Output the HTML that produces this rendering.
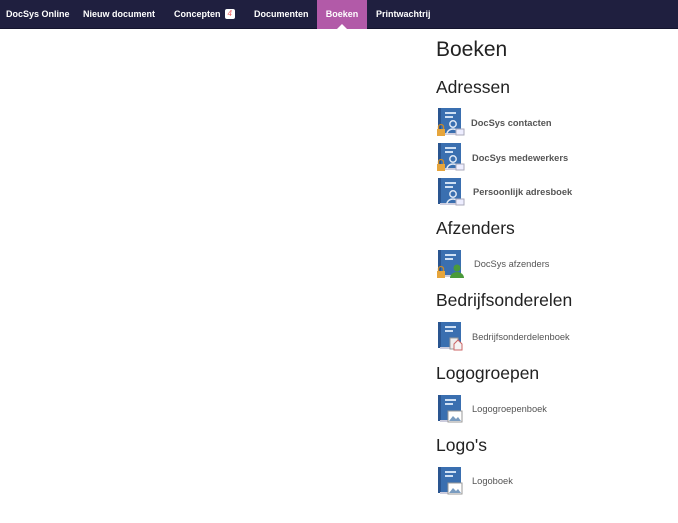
<!DOCTYPE html>
<html><head><meta charset="utf-8"><style>
*{margin:0;padding:0;box-sizing:border-box}
body{width:678px;height:523px;background:#fff;font-family:"Liberation Sans",sans-serif;position:relative;overflow:hidden}
.nav{position:absolute;left:0;top:0;width:678px;height:29px;background:#1f1f3f;border-bottom:1px solid #14142e}
.nav span{position:absolute;top:0;height:29px;line-height:29px;color:#fff;font-size:9px;font-weight:bold}
.act{background:#b25aa8;}
.badge{display:inline-block;background:#fff;color:#e66;font-size:8px;line-height:10px;padding:0 3px;border-radius:2px;vertical-align:1px;margin-left:4px;font-weight:normal}
.h{position:absolute;left:436px;color:#222;font-weight:normal}
.t{position:absolute;font-size:9.3px;color:#555}
.ic{position:absolute;left:437px;width:28px;height:30px}
</style></head><body>
<div class="nav">
<span style="left:6px">DocSys Online</span>
<span style="left:83px">Nieuw document</span>
<span style="left:174px">Concepten<i class="badge">4</i></span>
<span style="left:254px">Documenten</span>
<span class="act" style="left:317px;width:50px;text-align:center">Boeken</span>
<span style="left:376px">Printwachtrij</span>
<div style="position:absolute;left:337px;top:24px;width:0;height:0;border-left:5px solid transparent;border-right:5px solid transparent;border-bottom:5px solid #fff"></div>
</div>
<div class="h" style="top:38px;font-size:21px">Boeken</div>
<div class="h" style="top:77px;font-size:17.5px">Adressen</div>
<div class="h" style="top:218px;font-size:17.5px">Afzenders</div>
<div class="h" style="top:290px;font-size:17.5px">Bedrijfsonderelen</div>
<div class="h" style="top:363px;font-size:17.5px">Logogroepen</div>
<div class="h" style="top:435px;font-size:17.5px">Logo's</div>

<svg width="0" height="0" style="position:absolute"><defs>
<g id="bk"><rect x="1" y="1" width="23" height="26" fill="#3a6fb0"/><rect x="1" y="1" width="3" height="26" fill="#2a5590"/><rect x="8" y="5" width="11" height="2" fill="#cfe0f4"/><rect x="8" y="9" width="8" height="2" fill="#cfe0f4"/><rect x="3" y="26" width="21" height="2" fill="#ccd"/></g>
<g id="lock"><rect x="0" y="22" width="8" height="7" fill="#e6a53c"/><path d="M1.5 22v-2a2.5 2.5 0 0 1 5 0v2" stroke="#c98a2a" stroke-width="1.3" fill="none"/></g>
<g id="ppl"><circle cx="16" cy="17" r="3.2" fill="none" stroke="#dfe8f4" stroke-width="1.5"/><path d="M10 27a6 5 0 0 1 12 0" fill="none" stroke="#dfe8f4" stroke-width="1.5"/><rect x="19" y="22" width="8" height="6" fill="#eef" stroke="#aab"/></g>
</defs></svg>

<svg class="ic" style="top:107px"><use href="#bk"/><use href="#ppl"/><use href="#lock"/></svg>
<div class="t" style="left:471px;top:118px;font-weight:bold">DocSys contacten</div>
<svg class="ic" style="top:142px"><use href="#bk"/><use href="#ppl"/><use href="#lock"/></svg>
<div class="t" style="left:472px;top:153px;font-weight:bold">DocSys medewerkers</div>
<svg class="ic" style="top:177px"><use href="#bk"/><use href="#ppl"/></svg>
<div class="t" style="left:473px;top:187px;font-weight:bold">Persoonlijk adresboek</div>
<svg class="ic" style="top:249px"><use href="#bk"/><circle cx="20" cy="19" r="3.5" fill="#4a9a3a"/><path d="M13 29a7 6 0 0 1 14 0z" fill="#4a9a3a"/><use href="#lock"/></svg>
<div class="t" style="left:474px;top:259px">DocSys afzenders</div>
<svg class="ic" style="top:321px"><use href="#bk"/><rect x="13" y="17" width="8" height="11" fill="#eee" stroke="#999"/><path d="M17 23l4-4 4 4v6h-8z" fill="#f4f4f4" stroke="#c66"/></svg>
<div class="t" style="left:472px;top:332px">Bedrijfsonderdelenboek</div>
<svg class="ic" style="top:394px"><use href="#bk"/><rect x="11" y="17" width="14" height="11" fill="#fff" stroke="#999"/><path d="M12 27l4-5 3 3 2-2 3 4z" fill="#7a9cc0"/></svg>
<div class="t" style="left:472px;top:404px">Logogroepenboek</div>
<svg class="ic" style="top:466px"><use href="#bk"/><rect x="11" y="17" width="14" height="11" fill="#fff" stroke="#999"/><path d="M12 27l4-5 3 3 2-2 3 4z" fill="#7a9cc0"/></svg>
<div class="t" style="left:472px;top:476px">Logoboek</div>
</body></html>
